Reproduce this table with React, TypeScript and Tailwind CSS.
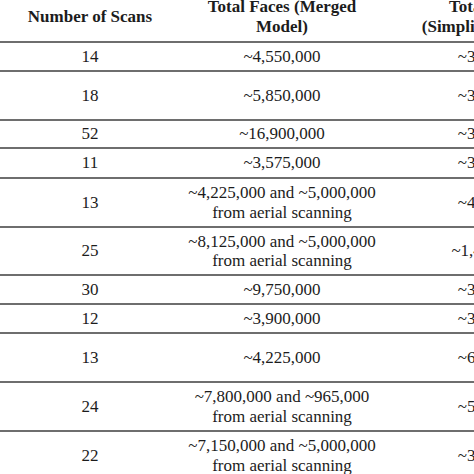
import React from 'react';

type Row = { scans: string; merged: string[]; simplified: string; h: string };

// row heights include the 2px top rule
const rows: Row[] = [
  { scans: '14', merged: ['~4,550,000'], simplified: '~350,000', h: 'h-[29px]' },
  { scans: '18', merged: ['~5,850,000'], simplified: '~350,000', h: 'h-[49px]' },
  { scans: '52', merged: ['~16,900,000'], simplified: '~350,000', h: 'h-[28px]' },
  { scans: '11', merged: ['~3,575,000'], simplified: '~350,000', h: 'h-[30px]' },
  { scans: '13', merged: ['~4,225,000 and ~5,000,000', 'from aerial scanning'], simplified: '~450,000', h: 'h-[49px]' },
  { scans: '25', merged: ['~8,125,000 and ~5,000,000', 'from aerial scanning'], simplified: '~1,400,000', h: 'h-[48px]' },
  { scans: '30', merged: ['~9,750,000'], simplified: '~350,000', h: 'h-[29px]' },
  { scans: '12', merged: ['~3,900,000'], simplified: '~350,000', h: 'h-[29px]' },
  { scans: '13', merged: ['~4,225,000'], simplified: '~600,000', h: 'h-[49px]' },
  { scans: '24', merged: ['~7,800,000 and ~965,000', 'from aerial scanning'], simplified: '~500,000', h: 'h-[49px]' },
  { scans: '22', merged: ['~7,150,000 and ~5,000,000', 'from aerial scanning'], simplified: '~350,000', h: 'h-[49px]' },
];

const cols = 'grid grid-cols-[180px_204px_212px] w-[596px]';

export default function App() {
  return (
    <div
      className="w-[474px] h-[474px] overflow-hidden bg-white text-[#1c1c1c]"
      style={{ fontFamily: '"Liberation Serif", "Times New Roman", serif' }}
    >
      <div className="-mt-[7px] text-[17px]">
        {/* header */}
        <div className={`${cols} h-[48px] font-bold leading-[20px] text-center`}>
          <div className="flex items-center justify-center">Number of Scans</div>
          <div className="flex flex-col items-center justify-center">
            <span>Total Faces (Merged</span>
            <span>Model)</span>
          </div>
          <div className="flex flex-col items-center justify-center">
            <span>Total Faces</span>
            <span>(Simplified Model)</span>
          </div>
        </div>

        {/* body */}
        {rows.map((r, i) => (
          <div key={i} className={`${cols} ${r.h} border-t-2 border-[#6e6e6e] text-center leading-[19.5px] shrink-0`}>
            <div className="flex items-center justify-center">{r.scans}</div>
            <div className="flex flex-col items-center justify-center whitespace-nowrap">
              {r.merged.map((m, j) => (
                <span key={j}>{m}</span>
              ))}
            </div>
            <div className="flex items-center justify-center whitespace-nowrap">{r.simplified}</div>
          </div>
        ))}
      </div>
    </div>
  );
}
